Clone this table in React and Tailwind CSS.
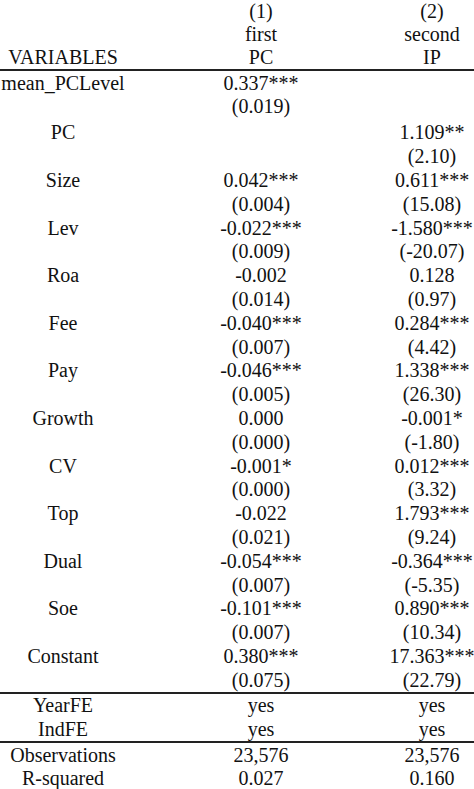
import React from 'react';

const rows = [
  ['PC', '', '1.109**', '', '(2.10)'],
  ['Size', '0.042***', '0.611***', '(0.004)', '(15.08)'],
  ['Lev', '-0.022***', '-1.580***', '(0.009)', '(-20.07)'],
  ['Roa', '-0.002', '0.128', '(0.014)', '(0.97)'],
  ['Fee', '-0.040***', '0.284***', '(0.007)', '(4.42)'],
  ['Pay', '-0.046***', '1.338***', '(0.005)', '(26.30)'],
  ['Growth', '0.000', '-0.001*', '(0.000)', '(-1.80)'],
  ['CV', '-0.001*', '0.012***', '(0.000)', '(3.32)'],
  ['Top', '-0.022', '1.793***', '(0.021)', '(9.24)'],
  ['Dual', '-0.054***', '-0.364***', '(0.007)', '(-5.35)'],
  ['Soe', '-0.101***', '0.890***', '(0.007)', '(10.34)'],
  ['Constant', '0.380***', '17.363***', '(0.075)', '(22.79)'],
];

const Cell = ({ children }) => (
  <div className="flex justify-center whitespace-nowrap">{children}</div>
);

const Row = ({ cells, h = 'h-[23.8px]' }) => (
  <div className={`grid grid-cols-[126px_270px_72px] items-center ${h}`}>
    {cells.map((c, i) => (
      <Cell key={i}>{c}</Cell>
    ))}
  </div>
);

export default function App() {
  return (
    <div
      className="w-[474px] h-[789px] bg-white text-[#111] text-[20px] leading-[23px] overflow-hidden"
      style={{ fontFamily: '"Liberation Serif", "Times New Roman", serif' }}
    >
      <Row cells={['', '(1)', '(2)']} h="h-[23px]" />
      <Row cells={['', 'first', 'second']} h="h-[23px]" />
      <Row cells={['VARIABLES', 'PC', 'IP']} h="h-[23px]" />
      <div className="h-[2px] bg-[#222]" />
      <div className="pt-[0.5px]">
        <Row cells={['mean_PCLevel', '0.337***', '']} h="h-[23px]" />
        <Row cells={['', '(0.019)', '']} h="h-[23px]" />
      </div>
      <div className="pt-[3.6px]">
        {rows.map(([name, a, b, sa, sb]) => (
          <React.Fragment key={name}>
            <Row cells={[name, a, b]} />
            <Row cells={['', sa, sb]} />
          </React.Fragment>
        ))}
      </div>
      <div className="h-[1.5px] bg-[#222]" />
      <div className="pt-[0.5px]">
        <Row cells={['YearFE', 'yes', 'yes']} h="h-[23.5px]" />
        <Row cells={['IndFE', 'yes', 'yes']} h="h-[23.5px]" />
      </div>
      <div className="h-[1.5px] bg-[#222]" />
      <div className="pt-[1px]">
        <Row cells={['Observations', '23,576', '23,576']} h="h-[23.5px]" />
        <Row cells={['R-squared', '0.027', '0.160']} h="h-[23.5px]" />
      </div>
    </div>
  );
}
